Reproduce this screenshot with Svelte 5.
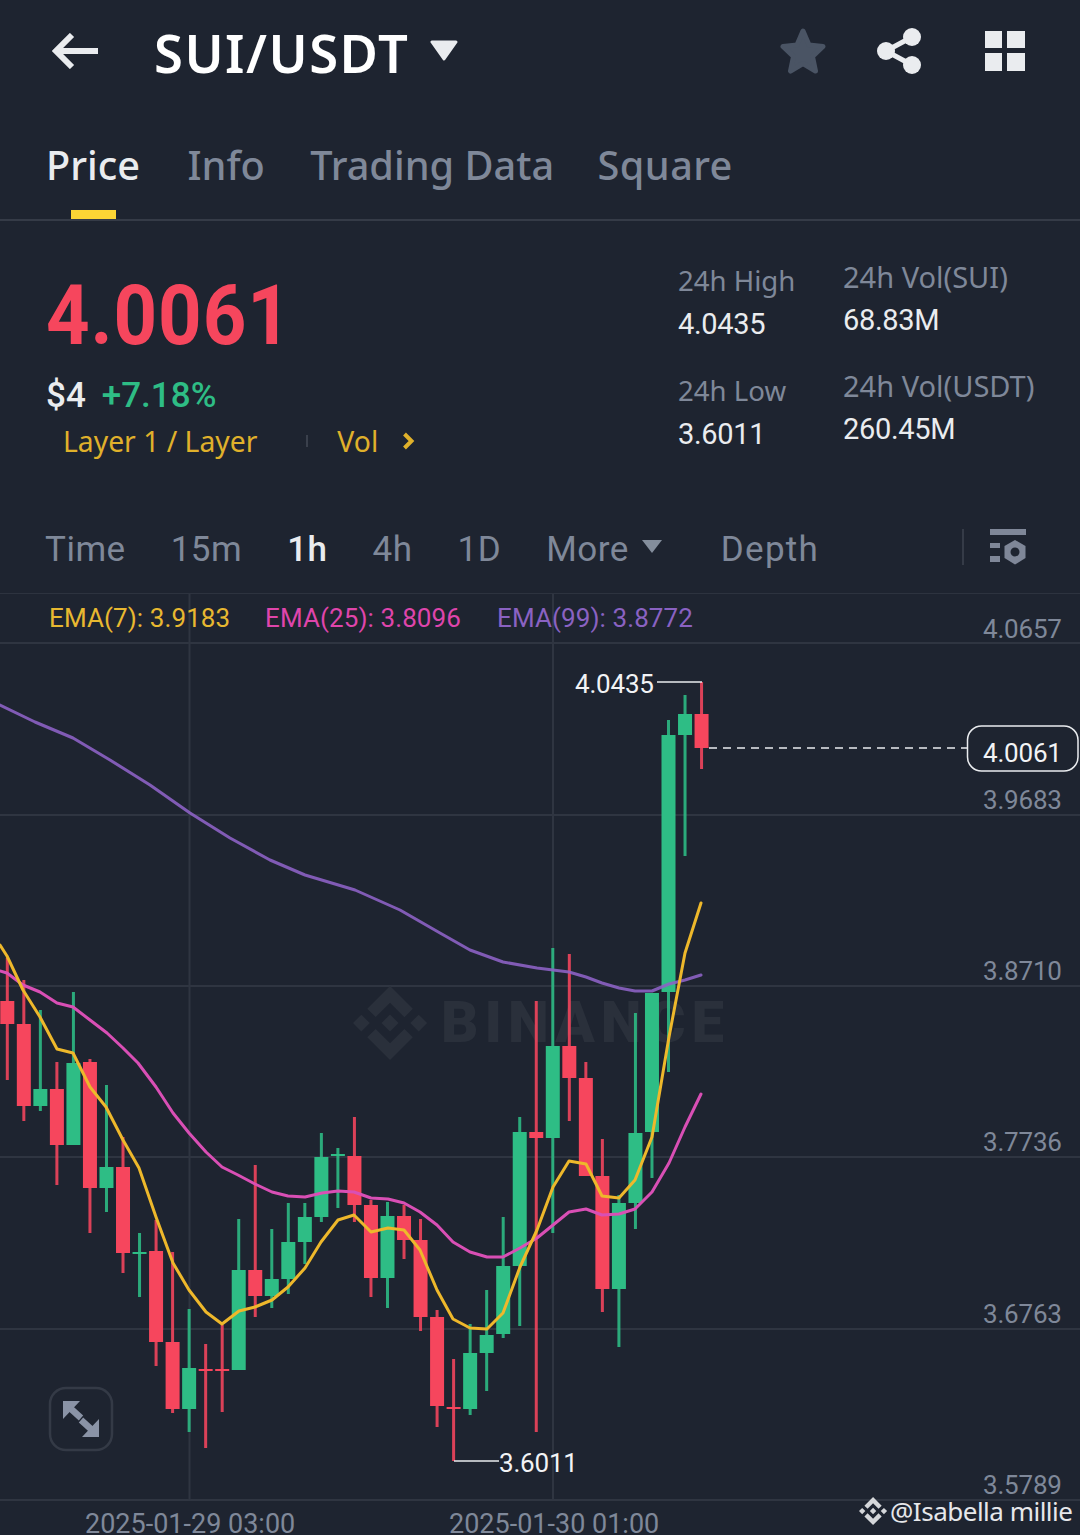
<script>
  const tabs = ['Price', 'Info', 'Trading Data', 'Square'];
  const stats = [
    [['24h High', '4.0435'], ['24h Low', '3.6011']],
    [['24h Vol(SUI)', '68.83M'], ['24h Vol(USDT)', '260.45M']]
  ];
  const times = ['Time', '15m', '1h', '4h', '1D'];
  const UP = '#2ebd85', DOWN = '#f6465d';
  // [direction (1 up, 0 down), high, low, body top, body bottom]
  const raw = [
    [0,958,1080,1001,1024],[0,980,1121,1024,1106],[1,1010,1111,1089,1106],[0,1062,1185,1089,1145],
    [1,992,1145,1063,1145],[0,1059,1233,1062,1188],[1,1085,1212,1167,1188],[0,1137,1273,1167,1253],
    [1,1233,1297,1252,1254],[0,1220,1366,1251,1342],[0,1252,1413,1342,1409],[1,1309,1432,1368,1409],
    [0,1344,1448,1369,1371],[0,1325,1412,1369,1371],[1,1219,1370,1270,1370],[0,1165,1317,1270,1296],
    [1,1229,1308,1279,1296],[1,1203,1294,1242,1279],[1,1203,1264,1217,1242],[1,1133,1222,1157,1217],
    [1,1148,1208,1154,1156],[0,1117,1222,1156,1205],[0,1200,1297,1205,1278],[1,1202,1308,1216,1278],
    [0,1205,1259,1216,1240],[0,1219,1331,1240,1317],[0,1310,1427,1317,1406],[0,1359,1461,1407,1409],
    [1,1324,1415,1353,1409],[1,1290,1391,1335,1353],[1,1217,1338,1266,1334],[1,1117,1326,1132,1266],
    [0,1001,1432,1132,1138],[1,948,1233,1046,1138],[0,954,1121,1046,1078],[0,1062,1176,1078,1176],
    [0,1139,1312,1176,1289],[1,1195,1347,1203,1289],[1,1013,1229,1133,1203],[1,993,1178,993,1132],
    [1,720,1072,735,992],[1,695,856,714,735],[0,682,769,714,748]
  ];
  const cx = (i) => 7.3 + 16.53 * i;
  const candles = raw.map(([up, high, low, top, bottom], i) => ({
    x: cx(i), color: up ? UP : DOWN, high, low, top, bottom
  }));
  const ema7 = '0,945 7,956 23,990 40,1017 57,1049 73,1053 90,1087 106,1107 123,1140 139,1168 156,1217 173,1263 189,1290 206,1312 222,1324 239,1311 255,1307 272,1300 288,1287 305,1268 321,1242 338,1220 354,1215 371,1232 388,1228 404,1230 420,1250 437,1290 453,1319 470,1328 487,1329 503,1313 520,1267 537,1230 553,1187 569,1161 586,1164 602,1196 619,1198 635,1180 652,1137 669,1037 685,953 701,903';
  const ema25 = '0,971 7,973 23,985 40,992 57,1003 73,1007 90,1020 107,1033 123,1048 138,1063 156,1087 173,1113 189,1133 206,1152 222,1167 238,1175 255,1184 272,1192 288,1196 305,1197 322,1193 338,1191 354,1192 371,1198 388,1199 404,1203 420,1212 437,1225 453,1242 470,1252 487,1257 503,1257 520,1248 537,1238 553,1225 569,1212 586,1209 602,1215 619,1214 635,1209 652,1192 669,1163 685,1127 701,1094';
  const ema99 = '0,705 35,722 73,738 110,760 150,785 190,813 230,838 270,860 305,875 355,890 400,910 440,933 470,950 503,962 537,968 553,970 569,972 586,977 602,983 619,988 635,991 652,991 669,984 685,980 701,975';
  const gridY = [643, 815, 986, 1157, 1329, 1500];
  const axis = [['4.0657', 638], ['3.9683', 809], ['3.8710', 980], ['3.7736', 1151], ['3.6763', 1323], ['3.5789', 1494]];
  const logo = 'M38.73 53.2l24.59-24.58 24.6 24.6 14.3-14.31L63.32 0 24.42 38.9l14.31 14.3zM0 63.31l14.3-14.31 14.31 14.31-14.31 14.3zM38.73 73.41l24.59 24.59 24.6-24.6 14.31 14.29-38.9 38.91-38.91-38.88-.01-.01zM98 63.31l14.3-14.31 14.31 14.3-14.31 14.32zM77.83 63.3L63.32 48.78 52.59 59.51l-1.24 1.23-2.54 2.54 14.51 14.5 14.51-14.47z';
</script>

<div class="page">
  <header class="top">
    <svg class="back" width="46" height="36" viewBox="0 0 46 36"><path d="M46 18H5M20 2 4 18l16 16" fill="none" stroke="#eaecef" stroke-width="6"/></svg>
    <h1>SUI/USDT</h1>
    <svg class="caret" width="28" height="22" viewBox="0 0 28 22"><path d="M2 2h24L14 19z" fill="#eaecef" stroke="#eaecef" stroke-width="3" stroke-linejoin="round"/></svg>
    <div class="top-icons">
      <svg class="star" width="46" height="47" viewBox="0 0 46 47"><path d="M23 3l6 14 14 1.500-10.500 10L35.500 43 23 35.500 10.500 43l3-14.500L3 18.500 17 17z" fill="#4a5464" stroke="#4a5464" stroke-width="5" stroke-linejoin="round"/></svg>
      <svg class="share" width="44" height="46" viewBox="0 0 44 46"><path d="M35 9 9 23l26 14" fill="none" stroke="#eaecef" stroke-width="5"/><circle cx="35" cy="9" r="9" fill="#eaecef"/><circle cx="9" cy="23" r="9" fill="#eaecef"/><circle cx="35" cy="37" r="9" fill="#eaecef"/></svg>
      <svg width="40" height="40" viewBox="0 0 40 40"><path d="M0 0h17v17H0zM22 0h18v17H22zM0 22h17v18H0zM22 22h18v18H22z" fill="#eaecef"/></svg>
    </div>
  </header>

  <nav class="tabs">
    {#each tabs as tab, i}
      <div class="tab" class:active={i === 0}>{tab}</div>
    {/each}
  </nav>

  <section class="summary">
    <div class="price-col">
      <div class="price">4.0061</div>
      <div class="sub"><span class="usd">$4</span><span class="pct">+7.18%</span></div>
      <div class="tags">
        <span>Layer 1 / Layer</span>
        <i class="tick"></i>
        <span>Vol</span>
        <svg width="14" height="18" viewBox="0 0 14 18"><path d="M2.500 2l7 7-7 7" fill="none" stroke="#e0b12b" stroke-width="4"/></svg>
      </div>
    </div>
    {#each stats as col, c}
      <div class="stat-col" class:second={c === 1}>
        {#each col as [label, value]}
          <div class="stat"><div class="label">{label}</div><div class="value">{value}</div></div>
        {/each}
      </div>
    {/each}
  </section>

  <div class="intervals">
    {#each times as t}
      <span class="iv" class:on={t === '1h'}>{t}</span>
    {/each}
    <span class="iv more">More<svg width="20" height="13" viewBox="0 0 20 13"><path d="M0 0h20L10 13z" fill="#848e9c"/></svg></span>
    <span class="iv depth">Depth</span>
    <i class="sep"></i>
    <svg class="cfg" width="36" height="36" viewBox="0 0 36 36">
      <path d="M0 0h36v6H0zM0 14h10v5H0zM0 27h10v6H0z" fill="#7f8798"/>
      <path d="M25 11l10.500 6v12L25 35.500 14.500 29V17z" fill="#7f8798"/>
      <circle cx="25" cy="23" r="4.500" fill="#1e2430"/>
    </svg>
  </div>

  <div class="chart">
    <svg class="plot" width="1080" height="942" viewBox="0 593 1080 942">
      <line x1="0" x2="1080" y1="593" y2="593" stroke="#2d333f" stroke-width="2"/>
      {#each gridY as y}
        <line x1="0" x2="1080" y1={y} y2={y} stroke="#2f3541" stroke-width="2"/>
      {/each}
      <line x1="189.500" x2="189.500" y1="594" y2="1500" stroke="#2f3541" stroke-width="2"/>
      <line x1="553" x2="553" y1="594" y2="1500" stroke="#2f3541" stroke-width="2"/>

      <g transform="translate(353 986) scale(0.585)" fill="#2a303b"><path d={logo}/></g>
      <text class="wm" x="441" y="1042">BINANCE</text>

      {#each candles as c}
        <rect x={c.x - 1.5} y={c.high} width="3" height={c.low - c.high} fill={c.color} opacity="0.88"/>
        <rect x={c.x - 7} y={c.top} width="14" height={c.bottom - c.top} fill={c.color}/>
      {/each}

      <polyline points={ema99} class="ma" stroke="#8c62c4" opacity="0.9"/>
      <polyline points={ema25} class="ma" stroke="#d94fb5"/>
      <polyline points={ema7} class="ma" stroke="#eeb82b"/>

      <path d="M657 682h45" stroke="#eaecef" stroke-width="1.500" fill="none"/>
      <path d="M454 1461h45" stroke="#eaecef" stroke-width="1.500" fill="none"/>
      <line x1="709" x2="967" y1="748" y2="748" stroke="#eaecef" stroke-width="1.500" stroke-dasharray="8 6"/>

      <text class="pin" x="575" y="693">4.0435</text>
      <text class="pin" x="499" y="1472">3.6011</text>

      <text class="ema" x="49" y="627" fill="#e8b830">EMA(7): 3.9183</text>
      <text class="ema" x="265" y="627" fill="#df45ab">EMA(25): 3.8096</text>
      <text class="ema" x="497" y="627" fill="#8a62c2">EMA(99): 3.8772</text>

      {#each axis as [label, y]}
        <text class="ax" x="983" {y}>{label}</text>
      {/each}
      <text class="date" x="85" y="1533">2025-01-29 03:00</text>
      <text class="date" x="449" y="1533">2025-01-30 01:00</text>

      <rect x="967.500" y="726" width="110.500" height="45" rx="14" fill="#1e2430" stroke="#eaecef" stroke-width="1.500"/>
      <text class="pin" x="983" y="762">4.0061</text>

      <rect x="50" y="1388" width="62" height="62" rx="16" fill="#1e2430" stroke="#343a46" stroke-width="2.500"/>
      <path d="M63 1401h17l-17 18zM99 1437H82l17-18z" fill="#8a93a6"/>
      <path d="M70 1408l11 10M92 1430l-11-10" stroke="#8a93a6" stroke-width="6.500"/>

      <g transform="translate(859 1497) scale(0.222)" fill="#d5d7da"><path d={logo}/></g>
      <text class="credit" x="890" y="1521">@Isabella millie</text>
    </svg>
  </div>
</div>

<style>
  :global(body) { margin: 0; background: #1e2430; }
  .page {
    width: 1080px; height: 1535px; overflow: hidden; background: #1e2430;
    display: flex; flex-direction: column;
    font-family: "Noto Sans", sans-serif; color: #eaecef;
  }
  .top { height: 108px; display: flex; align-items: center; padding: 0 55px 6px 52px; box-sizing: border-box; }
  .back { flex: none; }
  h1 { margin: 4px 0 0 56px; font-size: 52.500px; font-weight: 600; color: #fff; line-height: 1; letter-spacing: 1.500px; }
  .caret { margin-left: 21px; }
  .top-icons { margin-left: auto; display: flex; align-items: center; }
  .star { margin-right: 51px; }
  .share { margin-right: 64px; }

  .tabs { height: 113px; display: flex; gap: 45.500px; padding: 0 0 0 46px; border-bottom: 2px solid #353b47; box-sizing: border-box; align-items: flex-start; }
  .tab { position: relative; font-size: 39.700px; line-height: 114px; height: 111px; color: #7f8899; font-weight: 500; }
  .tab:nth-child(2) { margin-left: 2px; }
  .tab:nth-child(4) { margin-left: -2px; letter-spacing: 0.4px; }
  .tab.active { color: #eaecef; }
  .tab.active::after { content: ""; position: absolute; left: 25px; width: 45px; height: 9px; bottom: 0; background: #fcd535; }

  .summary { height: 276px; display: grid; grid-template-columns: 631px 166px 1fr; padding-left: 47px; box-sizing: border-box; }
  .price { font-family: Roboto, sans-serif; font-weight: 700; font-size: 84px; line-height: 84px; margin: 53px 0 0 -1px; color: #f6465d; letter-spacing: 1px; transform: scaleX(0.906); transform-origin: left center; }
  .sub { display: flex; gap: 16px; margin-top: 17px; font-family: Roboto, sans-serif; font-size: 35px; line-height: 42px; font-weight: 500; }
  .usd { color: #eaecef; margin-left: -1px; }
  .pct { color: #2ebd85; }
  .tags { display: flex; align-items: center; margin: 4px 0 0 16px; font-size: 28.300px; line-height: 40px; color: #e0b12b; }
  .tick { width: 2px; height: 12px; background: #3a404c; margin: 0 29px 0 49px; }
  .tags svg { margin-left: 24px; }
  .stat-col { padding-top: 41px; }
  .stat-col.second { padding: 38px 0 0 0; margin-left: -1px; }
  .stat { height: 110px; }
  .stat-col.second .stat { height: 109px; }
  .label { font-size: 27.600px; line-height: 36px; color: #7f8899; }
  .second .label { font-size: 29px; }
  .value { font-family: Roboto, sans-serif; font-size: 29px; line-height: 36px; margin-top: 8px; color: #eaecef; letter-spacing: -0.3px; }
  .second .value { margin-top: 7px; }

  .intervals { height: 96px; display: flex; align-items: center; gap: 45px; padding: 8px 54px 0 45px; box-sizing: border-box; font-family: Roboto, sans-serif; font-size: 35px; color: #7f8899; letter-spacing: 0.5px; }
  .iv.on { color: #eaecef; font-weight: 500; }
  .more { display: flex; align-items: center; gap: 13px; }
  .more svg { margin-top: -6px; }
  .depth { margin-left: 14px; letter-spacing: 1.300px; }
  .sep { margin: -4px -19px 0 auto; width: 2px; height: 36px; background: #353b47; }
  .cfg { margin-top: -4px; }
  .chart { flex: 1; position: relative; min-height: 0; }
  .plot { display: block; }
  .ma { fill: none; stroke-width: 3; stroke-linejoin: round; stroke-linecap: round; }
  .wm { font-family: Roboto, sans-serif; font-weight: 900; font-size: 58px; letter-spacing: 6px; fill: #2a303b; }
  .pin { font-family: Roboto, sans-serif; font-size: 26px; fill: #f2f3f5; letter-spacing: -0.2px; }
  .ema { font-family: Roboto, sans-serif; font-size: 26px; letter-spacing: 0.1px; }
  .ax { font-family: Roboto, sans-serif; font-size: 26px; fill: #7f8899; letter-spacing: -0.2px; }
  .date { font-family: Roboto, sans-serif; font-size: 27px; fill: #7f8899; }
  .credit { font-family: "Noto Sans", sans-serif; font-size: 26px; fill: #e6e7ea; letter-spacing: -0.5px; }
</style>
